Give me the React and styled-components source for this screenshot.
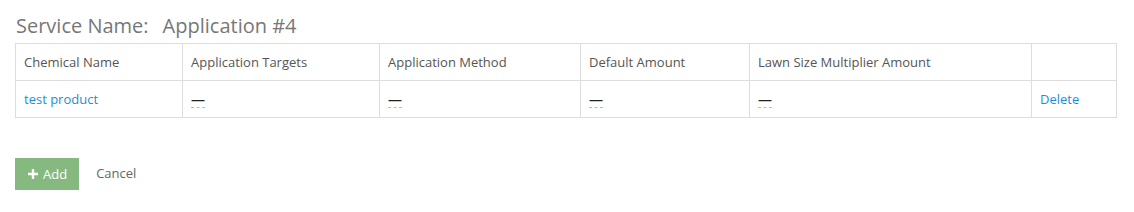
import React from "react";
import styled, { createGlobalStyle } from "styled-components";

const Global = createGlobalStyle`
  html, body { margin: 0; padding: 0; background: #fff; }
  body { font-family: "Open Sans", "Liberation Sans", sans-serif; color: #555; }
`;

const Page = styled.div`
  padding: 12px 17px 0 15px;
`;

const Title = styled.h3`
  margin: 0 0 4px 1px;
  font-size: 20px;
  font-weight: 400;
  line-height: 27px;
  color: #777;
  display: flex;
  gap: 14px;
`;

const Table = styled.table`
  width: 100%;
  border-collapse: collapse;
  border: 1px solid #ddd;
  font-size: 13px;
  table-layout: fixed;
`;

const Th = styled.th`
  box-sizing: border-box;
  text-align: left;
  font-weight: 400;
  color: #555;
  padding: 8px 8px;
  line-height: 20px;
  height: 37px;
  border: 1px solid #ddd;
  width: ${(p) => (p.$w ? `${p.$w}px` : "auto")};
`;

const Td = styled.td`
  box-sizing: border-box;
  padding: 8px 8px;
  line-height: 20px;
  height: 37px;
  border: 1px solid #ddd;
  vertical-align: top;
`;

const Link = styled.a`
  color: #1a8fd8;
  text-decoration: none;
  cursor: pointer;
`;

const Editable = styled.span`
  display: inline-block;
  vertical-align: top;
  color: #222;
  font-size: 14px;
  line-height: 14px;
  border-bottom: 1px dashed #bbb;
  margin-top: 4px;
`;

const Actions = styled.div`
  display: flex;
  align-items: center;
  gap: 17px;
  margin-top: 40px;
`;

const AddButton = styled.button`
  display: flex;
  align-items: center;
  gap: 5px;
  height: 32px;
  padding: 0 12px 0 13px;
  background: #86b97f;
  border: none;
  color: #fff;
  font-family: inherit;
  font-size: 13px;
  cursor: pointer;
`;

const CancelLink = styled.a`
  color: #666;
  font-size: 13px;
  padding: 6px 0;
  margin-bottom: 2px;
`;

const Plus = () => (
  <svg width="10" height="10" viewBox="0 0 10 10">
    <path d="M3.8 0h2.4v3.8H10v2.4H6.2V10H3.8V6.2H0V3.8h3.8z" fill="#fff" />
  </svg>
);

const Dash = () => <Editable>—</Editable>;

export default function App() {
  return (
    <>
      <Global />
      <Page>
        <Title>
          <span>Service Name:</span>
          <span>Application #4</span>
        </Title>
        <Table>
          <thead>
            <tr>
              <Th $w={167}>Chemical Name</Th>
              <Th $w={197}>Application Targets</Th>
              <Th $w={201}>Application Method</Th>
              <Th $w={169}>Default Amount</Th>
              <Th $w={282}>Lawn Size Multiplier Amount</Th>
              <Th></Th>
            </tr>
          </thead>
          <tbody>
            <tr>
              <Td><Link>test product</Link></Td>
              <Td><Dash /></Td>
              <Td><Dash /></Td>
              <Td><Dash /></Td>
              <Td><Dash /></Td>
              <Td><Link>Delete</Link></Td>
            </tr>
          </tbody>
        </Table>
        <Actions>
          <AddButton><Plus />Add</AddButton>
          <CancelLink>Cancel</CancelLink>
        </Actions>
      </Page>
    </>
  );
}
